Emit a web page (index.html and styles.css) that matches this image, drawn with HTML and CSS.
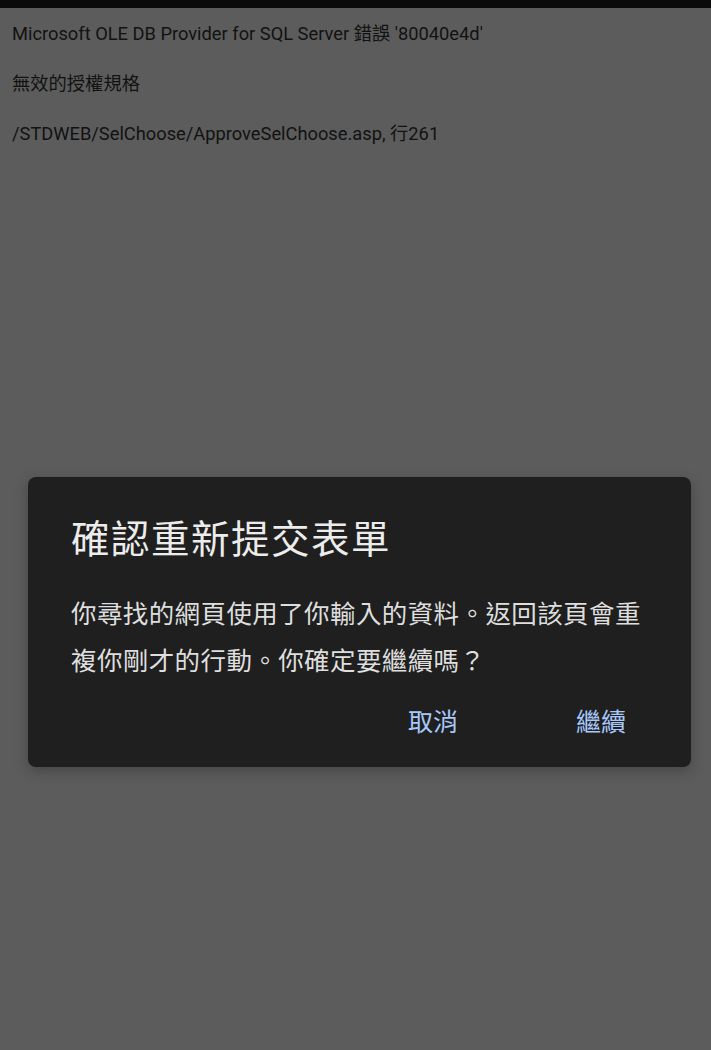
FILE: index.html
```html
<!DOCTYPE html>
<html lang="zh-Hant">
<head>
<meta charset="utf-8">
<link rel="stylesheet" href="styles.css">
</head>
<body>
<div class="topbar"></div>
<div class="content">
  <p>Microsoft OLE DB Provider for SQL Server 錯誤 '80040e4d'</p>
  <p>無效的授權規格</p>
  <p>/STDWEB/SelChoose/ApproveSelChoose.asp, 行261</p>
</div>
<div class="dialog">
  <h1 class="title">確認重新提交表單</h1>
  <p class="body">你尋找的網頁使用了你輸入的資料。返回該頁會重複你剛才的行動。你確定要繼續嗎？</p>
  <div class="actions">
    <span class="btn">取消</span>
    <span class="btn">繼續</span>
  </div>
</div>
</body>
</html>
```
FILE: styles.css
```css
html, body {
  margin: 0;
  padding: 0;
  height: 100%;
}
body {
  background: #5c5c5c;
  font-family: Roboto, "Noto Sans CJK TC", sans-serif;
  position: relative;
  overflow: hidden;
}
.topbar {
  height: 8px;
  background: #0b0b0b;
}
.content {
  padding: 15px 12px 0;
}
.content p {
  margin: 0 0 28px;
  font-size: 18.3px;
  line-height: 22px;
  color: #121212;
}
.dialog {
  position: absolute;
  left: 28px;
  top: 477px;
  width: 663px;
  box-sizing: border-box;
  background: #1f1f1f;
  border-radius: 8px;
  padding: 35px 43px 32px;
  box-shadow: 0 4px 14px rgba(0,0,0,0.25);
  font-family: "Noto Sans CJK TC", sans-serif;
}
.title {
  margin: 0;
  font-size: 38.5px;
  line-height: 48px;
  font-weight: 400;
  color: #ececec;
  letter-spacing: 1.5px;
}
.body {
  margin: 28px 0 0;
  font-size: 25.5px;
  line-height: 47px;
  color: #dedede;
  letter-spacing: 0.4px;
}
.actions {
  margin-top: 23px;
  display: flex;
  justify-content: flex-end;
  gap: 118px;
  padding-right: 22px;
}
.btn {
  font-size: 25px;
  line-height: 30px;
  color: #a8c7fa;
  font-weight: 400;
}
```
